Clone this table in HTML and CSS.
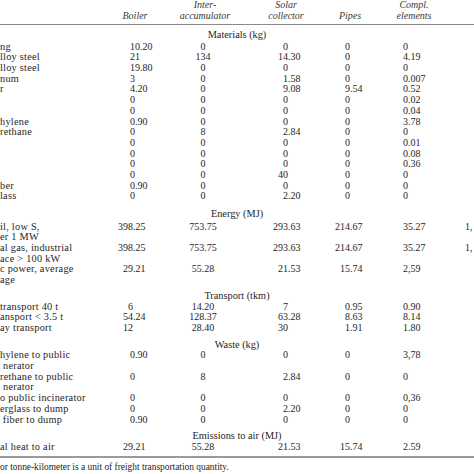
FILE: index.html
```html
<!DOCTYPE html>
<html lang="en">
<head>
<meta charset="utf-8">
<title>Table</title>
<link rel="stylesheet" href="styles.css">
</head>
<body>
<div class="page">
  <div class="tbl">
    <div class="row head">
      <div class="lab"></div>
      <div class="hc">Boiler</div>
      <div class="hc">Inter-<br>accumulator</div>
      <div class="hc">Solar<br>collector</div>
      <div class="hc">Pipes</div>
      <div class="hc">Compl.<br>elements</div>
      <div class="hc"></div>
    </div>

    <div class="sec first">Materials (kg)</div>
    <div class="row"><div class="lab">ng</div><div class="c bl">10.20</div><div class="c ia">0</div><div class="c so"><span class="i">0</span></div><div class="c pi"><span class="i">0</span></div><div class="c co">0</div><div class="c to"></div></div>
    <div class="row"><div class="lab">lloy steel</div><div class="c bl">21</div><div class="c ia">134</div><div class="c so"><span class="i">14</span>.30</div><div class="c pi"><span class="i">0</span></div><div class="c co">4.19</div><div class="c to"></div></div>
    <div class="row"><div class="lab">lloy steel</div><div class="c bl">19.80</div><div class="c ia">0</div><div class="c so"><span class="i">0</span></div><div class="c pi"><span class="i">0</span></div><div class="c co">0</div><div class="c to"></div></div>
    <div class="row"><div class="lab">num</div><div class="c bl">3</div><div class="c ia">0</div><div class="c so"><span class="i">1</span>.58</div><div class="c pi"><span class="i">0</span></div><div class="c co">0.007</div><div class="c to"></div></div>
    <div class="row"><div class="lab">r</div><div class="c bl">4.20</div><div class="c ia">0</div><div class="c so"><span class="i">9</span>.08</div><div class="c pi"><span class="i">9</span>.54</div><div class="c co">0.52</div><div class="c to"></div></div>
    <div class="row"><div class="lab"></div><div class="c bl">0</div><div class="c ia">0</div><div class="c so"><span class="i">0</span></div><div class="c pi"><span class="i">0</span></div><div class="c co">0.02</div><div class="c to"></div></div>
    <div class="row"><div class="lab"></div><div class="c bl">0</div><div class="c ia">0</div><div class="c so"><span class="i">0</span></div><div class="c pi"><span class="i">0</span></div><div class="c co">0.04</div><div class="c to"></div></div>
    <div class="row"><div class="lab">hylene</div><div class="c bl">0.90</div><div class="c ia">0</div><div class="c so"><span class="i">0</span></div><div class="c pi"><span class="i">0</span></div><div class="c co">3.78</div><div class="c to"></div></div>
    <div class="row"><div class="lab">rethane</div><div class="c bl">0</div><div class="c ia">8</div><div class="c so"><span class="i">2</span>.84</div><div class="c pi"><span class="i">0</span></div><div class="c co">0</div><div class="c to"></div></div>
    <div class="row"><div class="lab"></div><div class="c bl">0</div><div class="c ia">0</div><div class="c so"><span class="i">0</span></div><div class="c pi"><span class="i">0</span></div><div class="c co">0.01</div><div class="c to"></div></div>
    <div class="row"><div class="lab"></div><div class="c bl">0</div><div class="c ia">0</div><div class="c so"><span class="i">0</span></div><div class="c pi"><span class="i">0</span></div><div class="c co">0.08</div><div class="c to"></div></div>
    <div class="row"><div class="lab"></div><div class="c bl">0</div><div class="c ia">0</div><div class="c so"><span class="i">0</span></div><div class="c pi"><span class="i">0</span></div><div class="c co">0.36</div><div class="c to"></div></div>
    <div class="row"><div class="lab"></div><div class="c bl">0</div><div class="c ia">0</div><div class="c so"><span class="i">40</span></div><div class="c pi"><span class="i">0</span></div><div class="c co">0</div><div class="c to"></div></div>
    <div class="row"><div class="lab">ber</div><div class="c bl">0.90</div><div class="c ia">0</div><div class="c so"><span class="i">0</span></div><div class="c pi"><span class="i">0</span></div><div class="c co">0</div><div class="c to"></div></div>
    <div class="row"><div class="lab">lass</div><div class="c bl">0</div><div class="c ia">0</div><div class="c so"><span class="i">2</span>.20</div><div class="c pi"><span class="i">0</span></div><div class="c co">0</div><div class="c to"></div></div>

    <div class="sec energy">Energy (MJ)</div>
    <div class="row"><div class="lab">il, low S,<br>er 1 MW</div><div class="c bo"><span class="i">398</span>.25</div><div class="c ia">753.75</div><div class="c so"><span class="i">293</span>.63</div><div class="c pi"><span class="i">214</span>.67</div><div class="c co">35.27</div><div class="c to">1,</div></div>
    <div class="row"><div class="lab">al gas, industrial<br>ace &gt; 100 kW</div><div class="c bo"><span class="i">398</span>.25</div><div class="c ia">753.75</div><div class="c so"><span class="i">293</span>.63</div><div class="c pi"><span class="i">214</span>.67</div><div class="c co">35.27</div><div class="c to">1,</div></div>
    <div class="row"><div class="lab">c power, average<br>age</div><div class="c bo"><span class="i">29</span>.21</div><div class="c ia">55.28</div><div class="c so"><span class="i">21</span>.53</div><div class="c pi"><span class="i">15</span>.74</div><div class="c co">2,59</div><div class="c to"></div></div>

    <div class="sec transport">Transport (tkm)</div>
    <div class="row"><div class="lab">transport 40 t</div><div class="c bo"><span class="i">6</span></div><div class="c ia">14.20</div><div class="c so"><span class="i">7</span></div><div class="c pi"><span class="i">0</span>.95</div><div class="c co">0.90</div><div class="c to"></div></div>
    <div class="row"><div class="lab">ansport &lt; 3.5 t</div><div class="c bo"><span class="i">54</span>.24</div><div class="c ia">128.37</div><div class="c so"><span class="i">63</span>.28</div><div class="c pi"><span class="i">8</span>.63</div><div class="c co">8.14</div><div class="c to"></div></div>
    <div class="row"><div class="lab">ay transport</div><div class="c bo"><span class="i">12</span></div><div class="c ia">28.40</div><div class="c so"><span class="i">30</span></div><div class="c pi"><span class="i">1</span>.91</div><div class="c co">1.80</div><div class="c to"></div></div>

    <div class="sec waste">Waste (kg)</div>
    <div class="row"><div class="lab">hylene to public<br><span class="cont">nerator</span></div><div class="c bw">0.90</div><div class="c ia">0</div><div class="c so"><span class="i">0</span></div><div class="c pi"><span class="i">0</span></div><div class="c co">3,78</div><div class="c to"></div></div>
    <div class="row"><div class="lab">rethane to public<br><span class="cont">nerator</span></div><div class="c bw">0</div><div class="c ia">8</div><div class="c so"><span class="i">2</span>.84</div><div class="c pi"><span class="i">0</span></div><div class="c co">0</div><div class="c to"></div></div>
    <div class="row"><div class="lab">o public incinerator</div><div class="c bw">0</div><div class="c ia">0</div><div class="c so"><span class="i">0</span></div><div class="c pi"><span class="i">0</span></div><div class="c co">0,36</div><div class="c to"></div></div>
    <div class="row"><div class="lab">erglass to dump</div><div class="c bw">0</div><div class="c ia">0</div><div class="c so"><span class="i">2</span>.20</div><div class="c pi"><span class="i">0</span></div><div class="c co">0</div><div class="c to"></div></div>
    <div class="row"><div class="lab">&nbsp;fiber to dump</div><div class="c bw">0.90</div><div class="c ia">0</div><div class="c so"><span class="i">0</span></div><div class="c pi"><span class="i">0</span></div><div class="c co">0</div><div class="c to"></div></div>

    <div class="sec emis">Emissions to air (MJ)</div>
    <div class="row last"><div class="lab">al heat to air</div><div class="c bo"><span class="i">29</span>.21</div><div class="c ia">55.28</div><div class="c so"><span class="i">21</span>.53</div><div class="c pi"><span class="i">15</span>.74</div><div class="c co">2.59</div><div class="c to"></div></div>
  </div>
  <p class="note">or tonne-kilometer is a unit of freight transportation quantity.</p>
</div>
</body>
</html>
```

FILE: styles.css
```css
html, body {
  margin: 0;
  padding: 0;
  background: #ffffff;
  overflow: hidden;
}

body {
  width: 474px;
  height: 474px;
  font-family: "Liberation Serif", "Times New Roman", serif;
  color: #262626;
}

.page {
  width: 474px;
  overflow: hidden;
}

.tbl {
  display: flex;
  flex-direction: column;
  width: 474px;
}

.row {
  display: grid;
  grid-template-columns: 110px 50px 90px 72px 56px 72px 24px;
  align-items: start;
  line-height: 10.7px;
}

.lab {
  font-size: 10.3px;
  letter-spacing: 0.25px;
  white-space: nowrap;
}

.cont {
  padding-left: 3px;
}

.c {
  font-size: 10px;
  white-space: nowrap;
}

.c .i {
  display: inline-block;
  text-align: right;
}

.bl { padding-left: 20px; }
.bw { padding-left: 20px; }
.bo .i { width: 23px; }
.ia { text-align: center; padding-right: 4px; }
.so .i { width: 38px; }
.pi .i { width: 28px; }
.co { padding-left: 25px; }
.to { padding-left: 15px; }

.head {
  box-sizing: border-box;
  border-bottom: 1px solid #8a8a8a;
  height: 25px;
  align-items: end;
  padding-bottom: 3px;
  line-height: 10.7px;
}

.hc {
  font-style: italic;
  font-size: 10px;
  text-align: center;
  color: #3a3a3a;
}

.sec {
  font-size: 10.3px;
  line-height: 10.7px;
  text-align: center;
  padding-right: 0;
  padding-top: 5.5px;
  padding-bottom: 0.3px;
}

.sec.first { padding-top: 4.6px; padding-bottom: 1.3px; }
.sec.energy { padding-top: 6.5px; padding-bottom: 2.3px; }
.sec.transport { padding-top: 4.8px; padding-bottom: 0.3px; }
.sec.waste { padding-top: 5.9px; padding-bottom: 0; }
.sec.emis { padding-top: 5.4px; padding-bottom: 0.3px; }

.row.last {
  padding-bottom: 3.6px;
  border-bottom: 2px solid #9a9a9a;
}

.note {
  margin: 4px 0 0 0;
  font-size: 9.4px;
  line-height: 10px;
  white-space: nowrap;
}
```
